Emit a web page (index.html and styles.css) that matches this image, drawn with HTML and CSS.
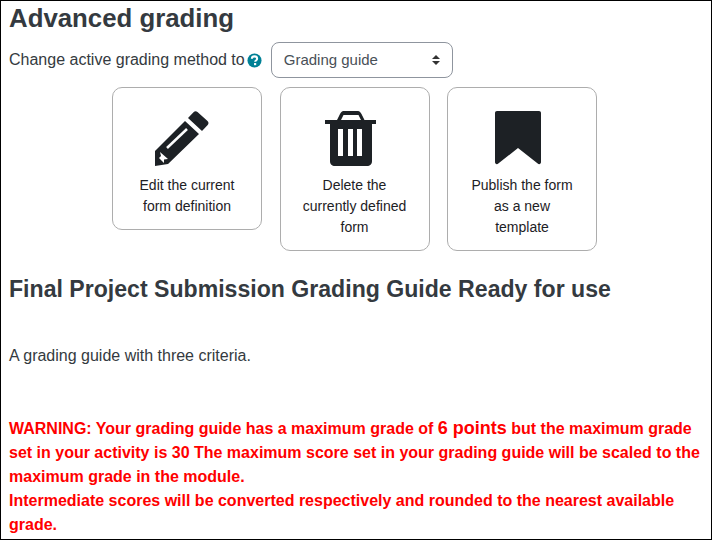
FILE: index.html
```html
<!DOCTYPE html>
<html lang="en">
<head>
  <meta charset="UTF-8">
  <title>Advanced grading</title>
  <link rel="stylesheet" href="styles.css">
</head>
<body>
<div class="page">
  <h2>Advanced grading</h2>
  <div class="method">
    <label>Change active grading method to</label>
    <svg class="help" viewBox="0 0 16 16"><circle cx="8" cy="8" r="7.500" fill="#008196"/><path d="M5.200 6.200a2.800 2.600 0 0 1 5.600 0c0 1.800-2.100 1.700-2.100 3.200" fill="none" stroke="#fff" stroke-width="2.200"/><rect x="7.500" y="10.700" width="2.300" height="2.300" fill="#fff"/></svg>
    <div class="select">
      <span>Grading guide</span>
      <svg class="arrows" viewBox="0 0 8 10"><path d="M4 0l4 4H0zM4 10l4-4H0z" fill="#333"/></svg>
    </div>
  </div>
  <div class="actions">
    <a class="action">
      <svg class="icon" viewBox="0 0 64 64"><path d="M33 11l5.500-5.700c1.300-1.300 2.700-1.300 4-.2l10 9c1.300 1.200 1.300 2.700.2 4L47 24zM30 14l14 13-31 30-13 2V44z" fill="#1d2125"/><path d="M32 22L12 41" stroke="#fff" stroke-width="2.500"/><path d="M5 45l8 7-4 .5v3.500l-5-5 2-2z" fill="#fff"/></svg>
      <span>Edit the current form definition</span>
    </a>
    <a class="action">
      <svg class="icon" viewBox="0 0 64 64"><path d="M2 13h12l3-6c.7-1.300 2-3 3.500-3h14.500c1.500 0 2.800 1.700 3.500 3l3 6h11.500v4h-4v37c0 3.500-2 5-5 5H12c-3 0-5-1.500-5-5V17H2zM18 13h20l-2.500-5h-15z" fill="#1d2125"/><path d="M15 22h5v27h-5zM25 22h5v27h-5zM34 22h5v27h-5z" fill="#fff"/></svg>
      <span>Delete the currently defined form</span>
    </a>
    <a class="action">
      <svg class="icon" viewBox="0 0 64 64"><path d="M5 6c0-1.200.8-2 2-2h42c1.200 0 2 .8 2 2v49c0 2-1.800 2.800-3.300 1.600L28 41 8.300 56.600C6.800 57.800 5 57 5 55z" fill="#1d2125"/></svg>
      <span>Publish the form as a new template</span>
    </a>
  </div>
  <h3>Final Project Submission Grading Guide Ready for use</h3>
  <p class="desc">A grading guide with three criteria.</p>
  <p class="warning">WARNING: Your grading guide has a maximum grade of <b>6 points</b> but the maximum grade set in your activity is 30 The maximum score set in your grading guide will be scaled to the maximum grade in the module.<br>Intermediate scores will be converted respectively and rounded to the nearest available grade.</p>
</div>
</body>
</html>
```

FILE: styles.css
```css
html, body { margin:0; height:100%; overflow:hidden; }
body { font-family:"Liberation Sans", Arial, sans-serif; font-size:16px; line-height:24px; color:#343a40; background:#fff; }
.page { box-sizing:border-box; height:540px; border:1px solid #000; padding:0 8px; overflow:hidden; }
h2 { margin:1px 0 0; font-size:25.800px; line-height:32px; font-weight:bold; }
.method { display:flex; align-items:center; margin-top:8px; height:36px; }
.help { width:15px; height:15px; margin-left:2px; }
.select { box-sizing:border-box; width:182px; height:36px; margin-left:9px; padding:0 12px; display:flex; align-items:center; justify-content:space-between; border:1px solid #8f959e; border-radius:8px; font-size:15px; color:#495057; }
.arrows { width:8px; height:10px; }
.actions { display:flex; justify-content:center; align-items:flex-start; gap:17.500px; margin-top:9px; padding-right:3px; }
.action { box-sizing:border-box; width:150px; padding:19px 20px 12px; border:1px solid #adadad; border-radius:10px; text-align:center; font-size:14px; line-height:21px; color:#1d2125; }
.icon { display:block; width:64px; height:64px; margin:0 auto 4px; }
h3 { margin:22px 0 0; font-size:23.100px; line-height:32px; font-weight:bold; }
.desc { margin:39px 0 0; line-height:24px; }
.warning { margin:49px 0 0; color:#f00; font-size:16px; font-weight:bold; line-height:24px; }
.warning b { font-size:18px; line-height:20px; }
```
